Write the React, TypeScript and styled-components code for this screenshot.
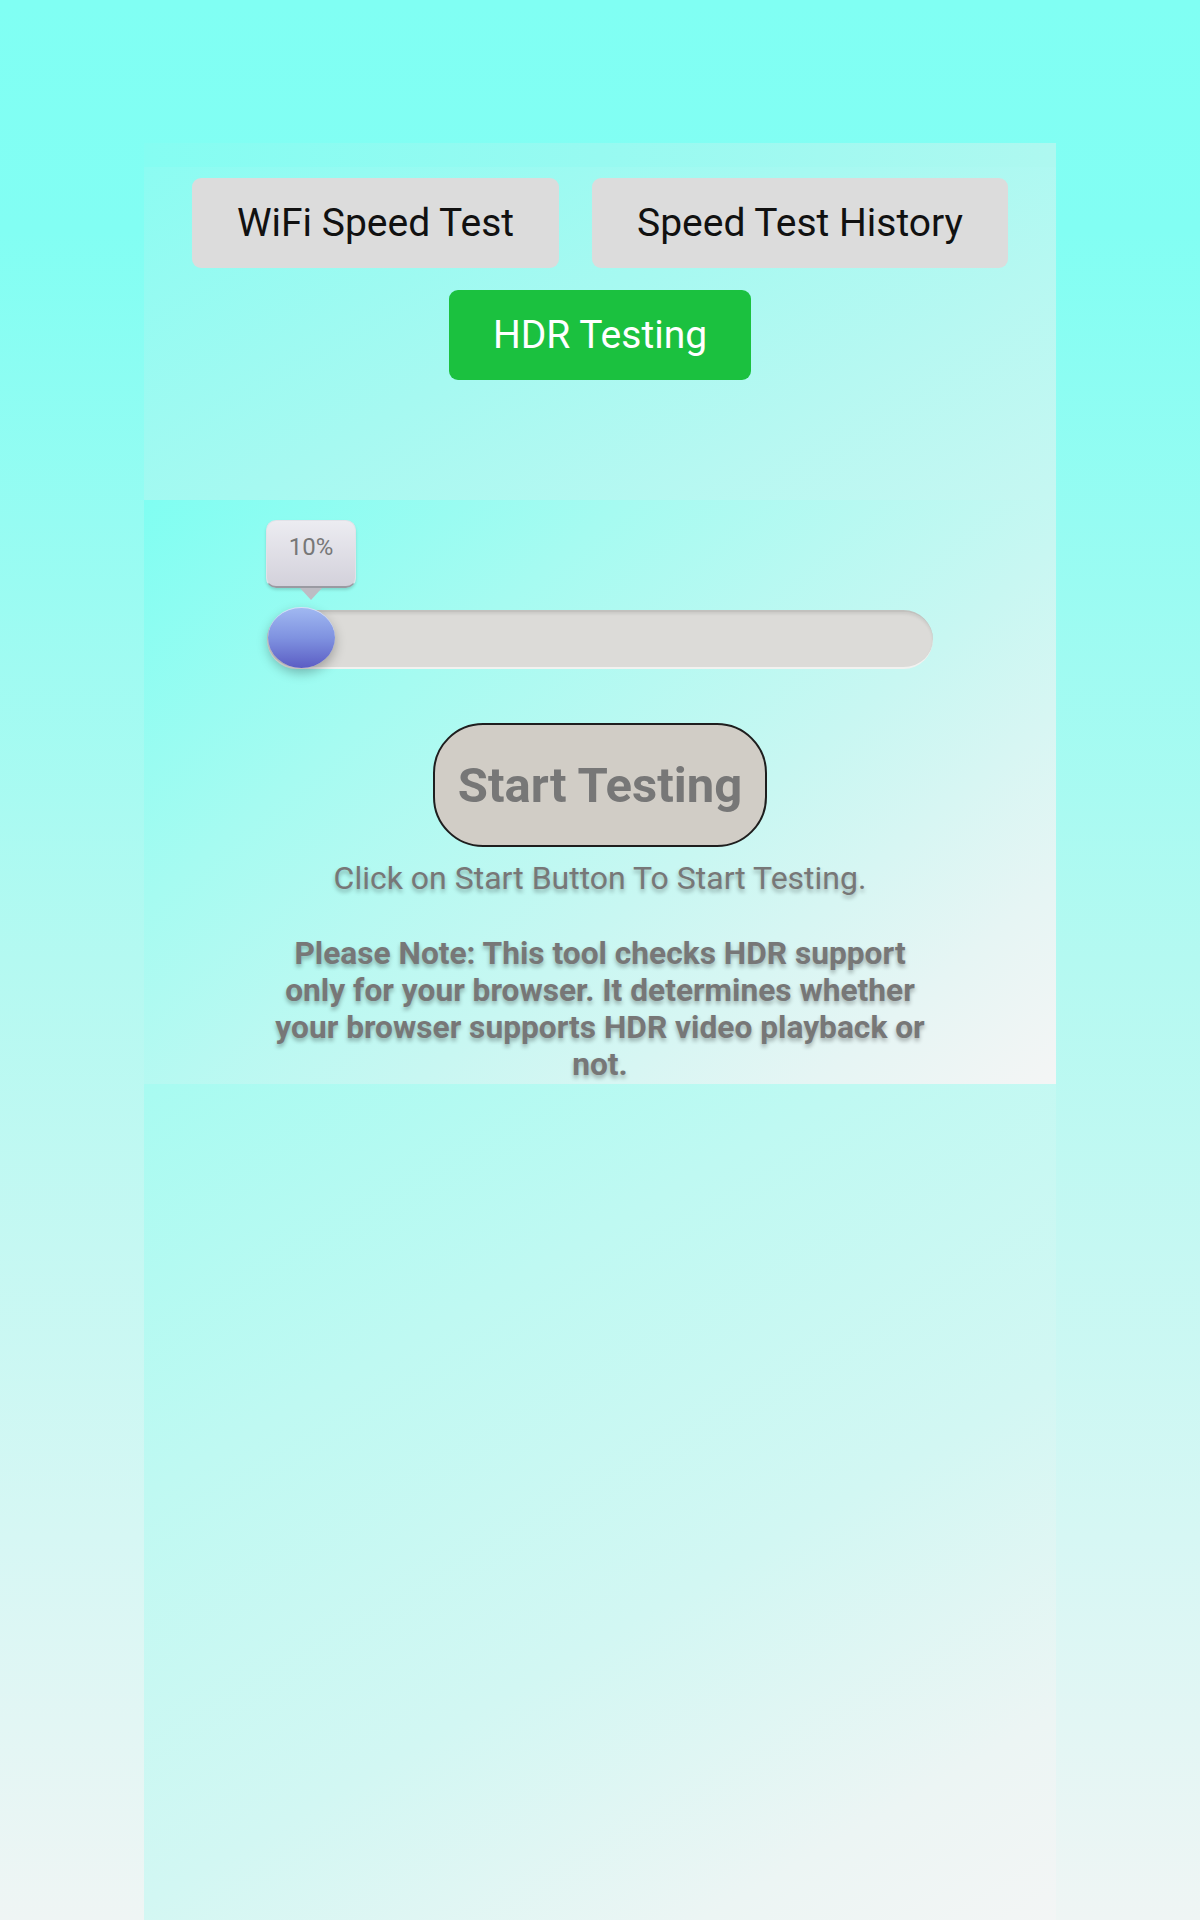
import React from "react";
import styled, { createGlobalStyle } from "styled-components";

const Global = createGlobalStyle`
  html, body {
    margin: 0;
    padding: 0;
  }
  body {
    min-height: 1920px;
    font-family: Roboto, "Liberation Sans", sans-serif;
    background: linear-gradient(to bottom, #80fff3 0%, #82fef3 12%, #b4f9f1 50%, #d6f7f4 80%, #eff5f4 100%);
  }
`;

const Page = styled.div`
  padding-top: 143px;
  min-height: 1920px;
  box-sizing: border-box;
  display: flex;
  flex-direction: column;
`;

const Panel = styled.main`
  width: 912px;
  margin: 0 auto;
  flex: 1;
  display: flex;
  flex-direction: column;
`;

const TopStrip = styled.div`
  height: 24px;
  background: linear-gradient(to right, #85fdf2 0%, #97faf1 50%, #aef8f0 100%);
`;

const Header = styled.header`
  height: 333px;
  box-sizing: border-box;
  padding-top: 11px;
  display: flex;
  flex-direction: column;
  align-items: center;
  gap: 22px;
  background: linear-gradient(150deg, #8cfcf2 0%, #a6f9f1 45%, #c6f7f2 100%);
`;

const NavRow = styled.div`
  display: flex;
  gap: 33px;
`;

const NavButton = styled.button<{ $active?: boolean }>`
  height: 90px;
  padding: 0 ${(p) => (p.$active ? 44 : 45)}px;
  border: none;
  border-radius: 9px;
  font-family: Roboto, "Liberation Sans", sans-serif;
  font-size: 39px;
  font-weight: 400;
  color: ${(p) => (p.$active ? "#ffffff" : "#111111")};
  background: ${(p) => (p.$active ? "#1bc13f" : "#dcdcdc")};
  cursor: pointer;
`;

const TestSection = styled.section`
  height: 584px;
  box-sizing: border-box;
  padding-top: 20px;
  display: flex;
  flex-direction: column;
  align-items: center;
  background: linear-gradient(140deg, #80fef2 0%, #a6fbf1 30%, #c8f7f2 60%, #e6f5f4 85%, #f4f5f5 100%);
`;

const SliderArea = styled.div`
  position: relative;
  width: 666px;
  padding-top: 90px;
`;

const Tooltip = styled.div`
  position: absolute;
  top: 0;
  width: 90px;
  height: 68px;
  box-sizing: border-box;
  border-radius: 10px;
  background: linear-gradient(to bottom, #ececf1, #d3d1db);
  border: 1px solid #e2e2e8;
  border-bottom: 2px solid #9a9aa2;
  box-shadow: 0 2px 3px rgba(0, 0, 0, 0.15);
  display: flex;
  justify-content: center;
  padding-top: 12px;
  font-size: 24px;
  color: #777;

  &::after {
    content: "";
    position: absolute;
    left: 50%;
    bottom: -14px;
    transform: translateX(-50%);
    border-left: 11px solid transparent;
    border-right: 11px solid transparent;
    border-top: 12px solid #bdbcc4;
  }
`;

const Track = styled.div`
  position: relative;
  height: 59px;
  box-sizing: border-box;
  border-radius: 30px;
  background: #dcdbd8;
  border-top: 2px solid #c2c1be;
  border-bottom: 2px solid #f2f2f0;
  box-shadow: inset 0 2px 3px rgba(0, 0, 0, 0.08);
`;

const Thumb = styled.div`
  position: absolute;
  top: -5px;
  width: 67px;
  height: 61px;
  border-radius: 50%;
  box-sizing: border-box;
  background: linear-gradient(to bottom, #a0b8f1 0%, #7f92e0 50%, #5b5dc4 100%);
  border-top: 1px solid #d6def6;
  box-shadow: 0 5px 12px rgba(0, 0, 0, 0.28);
`;

const StartButton = styled.button`
  margin-top: 54px;
  height: 124px;
  padding: 0 23px;
  border: 2px solid #1e1e1e;
  border-radius: 50px;
  background: #d1cdc6;
  font-family: Roboto, "Liberation Sans", sans-serif;
  font-size: 49px;
  font-weight: 700;
  color: #777;
  cursor: pointer;
`;

const Hint = styled.p`
  margin: 12px 0 0;
  font-size: 32px;
  line-height: 38px;
  color: #777;
  text-align: center;
  text-shadow: 0 3px 4px rgba(0, 0, 0, 0.3);
`;

const Note = styled.p`
  margin: 38px 0 0;
  width: 664px;
  font-size: 31.7px;
  line-height: 37px;
  font-weight: 700;
  color: #777;
  text-align: center;
  text-shadow: 0 3px 4px rgba(0, 0, 0, 0.3);
`;

const LowerSection = styled.section`
  flex: 1;
  background: linear-gradient(150deg, #a8fbf1 0%, #bff9f2 30%, #d2f7f3 60%, #ecf5f4 85%, #f3f5f5 100%);
`;

export default function App() {
  const value = 10;
  const thumbLeft = 1;
  return (
    <>
      <Global />
      <Page>
        <Panel>
          <TopStrip />
          <Header>
            <NavRow>
              <NavButton>WiFi Speed Test</NavButton>
              <NavButton>Speed Test History</NavButton>
            </NavRow>
            <NavButton $active>HDR Testing</NavButton>
          </Header>
          <TestSection>
            <SliderArea>
              <Tooltip style={{ left: thumbLeft - 2 }}>{value}%</Tooltip>
              <Track>
                <Thumb style={{ left: thumbLeft }} />
              </Track>
            </SliderArea>
            <StartButton>Start Testing</StartButton>
            <Hint>Click on Start Button To Start Testing.</Hint>
            <Note>
              Please Note: This tool checks HDR support only for your browser. It determines whether your browser
              supports HDR video playback or not.
            </Note>
          </TestSection>
          <LowerSection />
        </Panel>
      </Page>
    </>
  );
}
